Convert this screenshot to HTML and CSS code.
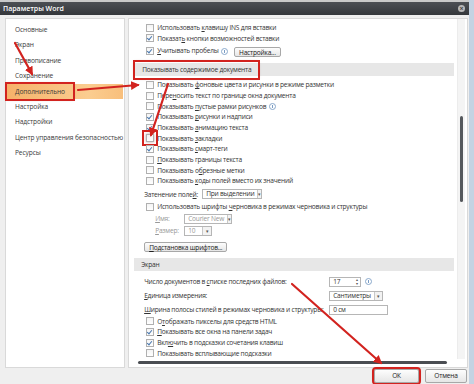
FILE: index.html
```html
<!DOCTYPE html>
<html lang="ru">
<head>
    <meta charset="UTF-8">
    <title>Параметры Word</title>
    <link rel="stylesheet" href="styles.css">
</head>
<body>
    <div class="window">
        <div class="titlebar">
            <span class="title">Параметры Word</span>
            <span class="close">×</span>
        </div>

        <div class="main">
            <ul class="nav">
                <li>Основные</li>
                <li>Экран</li>
                <li>Правописание</li>
                <li>Сохранение</li>
                <li class="active"><span class="mark">Дополнительно</span></li>
                <li>Настройка</li>
                <li>Надстройки</li>
                <li>Центр управления безопасностью</li>
                <li>Ресурсы</li>
            </ul>

            <div class="content">
                <div class="pane">
                    <div class="scroll">
                        <div class="row"><i class="cb"></i>Использовать <u>к</u>лавишу INS для вставки</div>
                        <div class="row"><i class="cb on"></i>Показат<u>ь</u> кнопки возможностей вставки</div>
                        <div class="row tall"><i class="cb on"></i><u>У</u>читывать пробелы <i class="info"></i><span class="btn">Настройка...</span></div>

                        <div class="section first"><span class="mark">Показывать содержимое документа</span></div>
                        <div class="list">
                            <div class="row"><i class="cb"></i>Показывать <u>ф</u>оновые цвета и рисунки в режиме разметки</div>
                            <div class="row"><i class="cb"></i>Пере<u>н</u>осить текст по границе окна документа</div>
                            <div class="row"><i class="cb"></i>Показывать <u>п</u>устые рамки рисунков <i class="info"></i></div>
                            <div class="row"><i class="cb on"></i>Показывать <u>р</u>исунки и надписи</div>
                            <div class="row"><i class="cb on"></i>Показывать <u>а</u>нимацию текста</div>
                            <div class="row"><i class="cb hl"></i>Показывать <u>з</u>акладки</div>
                            <div class="row"><i class="cb on"></i>Показывать <u>с</u>март-теги</div>
                            <div class="row"><i class="cb"></i><u>П</u>оказывать границы текста</div>
                            <div class="row"><i class="cb"></i>Показывать о<u>б</u>резные метки</div>
                            <div class="row"><i class="cb"></i>Показывать <u>к</u>оды полей вместо их значений</div>
                        </div>
                        <div class="field-row shade">
                            <span class="label">Затенение поле<u>й</u>:</span>
                            <span class="select w60"><span class="val">При выделении</span><span class="arr">▾</span></span>
                        </div>
                        <div class="row draft"><i class="cb"></i>Использовать шрифты <u>ч</u>ерновика в режимах черновика и структуры</div>
                        <div class="field-row sub">
                            <span class="label dim w29"><u>И</u>мя:</span>
                            <span class="select dis w48"><span class="val">Courier New</span><span class="arr">▾</span></span>
                        </div>
                        <div class="field-row sub">
                            <span class="label dim w29"><u>Р</u>азмер:</span>
                            <span class="select dis w28"><span class="val">10</span><span class="arr">▾</span></span>
                        </div>
                        <div class="btn-row"><span class="btn"><u>П</u>одстановка шрифтов...</span></div>

                        <div class="section"><span>Экран</span></div>
                        <div class="field-row screen first-f">
                            <span class="label w185">Число документов в <u>с</u>писке последних файлов:</span>
                            <span class="select w32"><span class="val">17</span><span class="spin">▴<br>▾</span></span>
                            <i class="info"></i>
                        </div>
                        <div class="field-row screen">
                            <span class="label w185"><u>Е</u>диница измерения:</span>
                            <span class="select w54"><span class="val">Сантиметры</span><span class="arr">▾</span></span>
                        </div>
                        <div class="field-row screen">
                            <span class="label w185"><u>Ш</u>ирина полосы стилей в режимах черновика и структуры:</span>
                            <span class="select w59"><span class="val">0 см</span></span>
                        </div>
                        <div class="row"><i class="cb"></i>О<u>т</u>ображать пикселы для средств HTML</div>
                        <div class="row"><i class="cb on"></i><u>П</u>оказывать все окна на панели задач</div>
                        <div class="row"><i class="cb on"></i>Вкл<u>ю</u>чить в подсказки сочетания клавиш</div>
                        <div class="row"><i class="cb"></i>Показывать всплывающие подсказки</div>
                    </div>
                    <div class="vscroll"><div class="thumb"></div></div>
                </div>
                <div class="hscroll"><div class="hthumb"></div></div>
            </div>
        </div>

        <div class="footer">
            <span class="btn big ok">ОК</span>
            <span class="btn big">Отмена</span>
        </div>
    </div>

    <svg class="arrows" width="474" height="384" viewBox="0 0 474 384">
        <defs>
            <marker id="head" viewBox="0 0 10 10" refX="8" refY="5" markerWidth="4" markerHeight="4" orient="auto">
                <path d="M0 0 L10 5 L0 10 z" fill="#d2231f"/>
            </marker>
        </defs>
        <line x1="15" y1="43" x2="32" y2="74" marker-end="url(#head)"/>
        <line x1="78" y1="90" x2="138" y2="85" marker-end="url(#head)"/>
        <line x1="168" y1="84" x2="151" y2="135" marker-end="url(#head)"/>
        <line x1="292" y1="284" x2="381" y2="363" marker-end="url(#head)"/>
    </svg>
</body>
</html>
```

FILE: styles.css
```css
body {
    margin: 0;
    width: 474px;
    height: 384px;
    overflow: hidden;
    background: linear-gradient(to right, #c9c9c9 0, #c9c9c9 469px, #c4d3e3 469px);
    font-family: 'Open Sans', 'Noto Sans', sans-serif;
    font-size: 6.6px;
    letter-spacing: -0.22px;
    color: #333;
    position: relative;
}

u {
    text-decoration: underline;
    text-underline-offset: 1px;
}

.window {
    width: 469px;
    height: 382px;
    margin-top: 2px;
    background: #efefef;
    display: flex;
    flex-direction: column;
}

.titlebar {
    height: 13px;
    background: linear-gradient(#4c4f54, #34373b);
    display: flex;
    align-items: center;
    justify-content: space-between;
    padding: 0 4px 0 3px;
}

.title {
    color: #fff;
    font-weight: 600;
    font-size: 7px;
    letter-spacing: 0;
}

.close {
    width: 7px;
    height: 7px;
    border-radius: 50%;
    background: #b8b8b8;
    color: #444;
    font-size: 7px;
    line-height: 7px;
    text-align: center;
    font-weight: 700;
}

.main {
    display: flex;
    gap: 3px;
    padding: 3px 1px 0 5px;
    height: 350px;
}

.nav {
    list-style: none;
    margin: 0;
    padding: 3px 1px 0 1px;
    width: 118px;
    background: #fff;
    border: 1px solid #d9d9d9;
}

.nav li {
    height: 15.4px;
    line-height: 15.4px;
    padding-left: 8px;
    color: #3a3a3a;
    white-space: nowrap;
    letter-spacing: -0.1px;
}

.nav li.active {
    background: linear-gradient(to right, #f6b26a, #fbcd90 70%, #f8bf7c);
    padding-left: 0;
}

.mark {
    display: inline-block;
    outline: 2px solid #d2231f;
    box-shadow: 0 0 3px rgba(120, 0, 0, 0.5);
}

.nav li.active .mark {
    padding: 0 8px;
    line-height: 15px;
    width: 50px;
}

.content {
    flex: 1;
    background: #fff;
    border: 1px solid #d9d9d9;
    display: flex;
    flex-direction: column;
}

.pane {
    flex: 1;
    display: flex;
    overflow: hidden;
}

.scroll {
    flex: 1;
    padding: 4px 0 0 17px;
    overflow: hidden;
    height: 334px;
}

.row {
    height: 10.67px;
    line-height: 10.67px;
    white-space: nowrap;
}

.row.tall {
    height: 13px;
    line-height: 13px;
}

.cb {
    display: inline-block;
    vertical-align: middle;
    width: 6px;
    height: 6px;
    border: 1px solid #b0b0b0;
    background: linear-gradient(#f4f4f4, #fff);
    margin: -1px 3px 0 0;
    position: relative;
}

.cb.on::after {
    content: '';
    position: absolute;
    left: 1px;
    top: 0;
    width: 2px;
    height: 4px;
    border: solid #4a78ae;
    border-width: 0 1px 1px 0;
    transform: rotate(40deg);
}

.cb.hl {
    outline: 2px solid #d2231f;
    outline-offset: 2px;
    box-shadow: 0 0 3px rgba(120, 0, 0, 0.4);
}

.info {
    display: inline-block;
    vertical-align: middle;
    width: 5px;
    height: 5px;
    border: 1px solid #8aa9cc;
    border-radius: 50%;
    margin: -1px 0 0 1px;
    position: relative;
}

.info::after {
    content: '';
    position: absolute;
    left: 2px;
    top: 1px;
    width: 1px;
    height: 3px;
    background: #7a9cc4;
}

.btn {
    display: inline-block;
    vertical-align: middle;
    height: 10px;
    line-height: 9px;
    padding: 0 4px;
    border: 1px solid #a8a8a8;
    border-radius: 2px;
    background: linear-gradient(#fdfdfd, #e6e6e6);
    color: #222;
    margin-left: 6px;
    box-sizing: border-box;
}

.section {
    margin: 6px 0 0 -12px;
    width: 320px;
    height: 13px;
    background: #e7e7e7;
    display: flex;
    align-items: center;
    color: #333;
}

.section span {
    padding-left: 7px;
}

.section .mark {
    height: 16px;
    line-height: 16px;
    padding: 0 7px;
    margin-left: 1px;
}

.list {
    margin-top: 4px;
}

.field-row {
    display: flex;
    align-items: center;
    height: 12px;
    white-space: nowrap;
}

.shade {
    margin: 1.5px 0 1.5px -2px;
}

.draft {
    margin-top: 0.5px;
}

.sub {
    margin-left: 9px;
}

.label {
    display: inline-block;
    flex: none;
}

.dim {
    color: #999;
}

.w29 { width: 29px; }
.w185 { width: 185px; }

.shade .label {
    width: 58px;
}

.select {
    display: inline-flex;
    align-items: stretch;
    height: 10px;
    border: 1px solid #b6b6b6;
    background: #fff;
    box-sizing: border-box;
    flex: none;
}

.select .val {
    flex: 1;
    padding: 0 3px;
    line-height: 8px;
}

.select .arr {
    width: 8px;
    border-left: 1px solid #c8c8c8;
    background: #f2f2f2;
    font-size: 5px;
    line-height: 8px;
    text-align: center;
    color: #555;
}

.select .spin {
    width: 6px;
    font-size: 4px;
    line-height: 4px;
    color: #555;
    text-align: center;
}

.select.dis .val {
    color: #999;
}

.w60 { width: 60px; }
.w48 { width: 48px; }
.w28 { width: 28px; }
.w32 { width: 32px; }
.w54 { width: 54px; }
.w59 { width: 59px; }

.screen .info {
    margin-left: 4px;
}

.btn-row {
    margin: 5px 0 0 -2px;
    height: 10px;
}

.btn-row .btn {
    margin-left: 0;
}

.screen {
    margin-left: -2px;
    height: 14px;
}

.first-f {
    margin-top: 4px;
}

.vscroll {
    width: 7px;
    margin: 0 2px 0 3px;
    background: #f4f4f4;
    border-left: 1px solid #ececec;
    position: relative;
}

.thumb {
    position: absolute;
    left: 2px;
    top: 97px;
    width: 3px;
    height: 86px;
    border-radius: 2px;
    background: #55585c;
}

.hscroll {
    height: 8px;
    padding: 2px 0 0 9px;
    box-sizing: border-box;
}

.hthumb {
    width: 309px;
    height: 3px;
    border-radius: 2px;
    background: #4a4d52;
}

.footer {
    flex: 1;
    display: flex;
    justify-content: flex-end;
    align-items: center;
    gap: 6px;
    padding: 0 2px 0 0;
}

.btn.big {
    width: 45px;
    height: 14px;
    line-height: 12px;
    text-align: center;
    margin: 0;
    border-radius: 2px;
}

.btn.big + .btn.big {
    width: 42px;
}

.btn.ok {
    outline: 2px solid #d2231f;
    box-shadow: 0 0 3px rgba(120, 0, 0, 0.5);
}

.arrows {
    position: absolute;
    left: 0;
    top: 0;
    pointer-events: none;
}

.arrows line {
    stroke: #d2231f;
    stroke-width: 2.2;
    stroke-linecap: round;
}
```
